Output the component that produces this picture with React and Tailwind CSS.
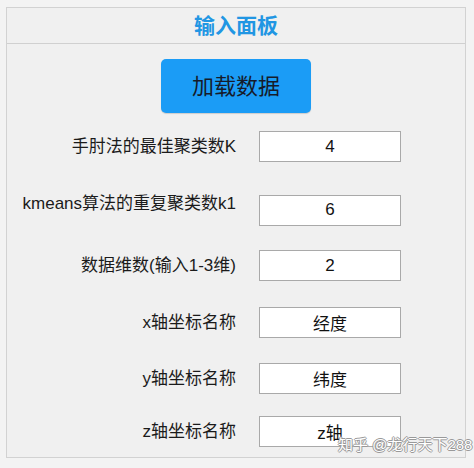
import React from "react";

const FONT = { fontFamily: '"Liberation Sans", "Noto Sans CJK SC", sans-serif' };

const ROWS = [
  { label: "手肘法的最佳聚类数K", value: "4", gap: "mt-[18px]" },
  { label: "kmeans算法的重复聚类数k1", value: "6", gap: "mt-[32px]", lift: true },
  { label: "数据维数(输入1-3维)", value: "2", gap: "mt-[24px]" },
  { label: "x轴坐标名称", value: "经度", gap: "mt-[26px]" },
  { label: "y轴坐标名称", value: "纬度", gap: "mt-[25px]" },
  { label: "z轴坐标名称", value: "z轴", gap: "mt-[22px]" },
];

function Row({ label, value, gap, lift }) {
  return (
    <div className={`flex items-center ${gap}`}>
      <label
        className={`w-[229px] shrink-0 whitespace-nowrap text-right text-[17px] leading-[20px] text-[#1b1b1b] ${lift ? "mb-[12px]" : ""}`}
      >
        {label}
      </label>
      <input
        readOnly
        value={value}
        className="ml-[23px] h-[31px] w-[142px] border border-[#a9a9a9] bg-white text-center text-[17px] text-[#111] outline-none"
        style={FONT}
      />
    </div>
  );
}

export default function App() {
  return (
    <div className="relative h-[468px] w-[474px] bg-[#f3f3f3] pl-[6px] pt-[7px]" style={FONT}>
      <div className="flex h-[451px] w-[460px] flex-col border border-[#d2d2d2] bg-[#f0f0f0]">
        <div className="flex h-[36px] items-center justify-center border-b border-[#d0d0d0] text-[21px] font-bold leading-none text-[#2196e3]">
          输入面板
        </div>
        <div className="flex flex-col">
          <button
            type="button"
            className="mx-auto mt-[15px] flex h-[54px] w-[150px] items-center justify-center rounded-[5px] bg-[#1b9cf6] text-[22px] text-[#161b2a] shadow-[0_1px_1px_rgba(0,0,0,0.15)]"
          >
            加载数据
          </button>
          {ROWS.map((r) => (
            <Row key={r.label} {...r} />
          ))}
        </div>
      </div>
      <div
        className="absolute left-[338px] top-[437px] text-[15px] leading-none text-white"
        style={{ textShadow: "1px 0 0 #999, -1px 0 0 #999, 0 1px 0 #999, 0 -1px 0 #999" }}
      >
        知乎 @龙行天下288
      </div>
    </div>
  );
}
